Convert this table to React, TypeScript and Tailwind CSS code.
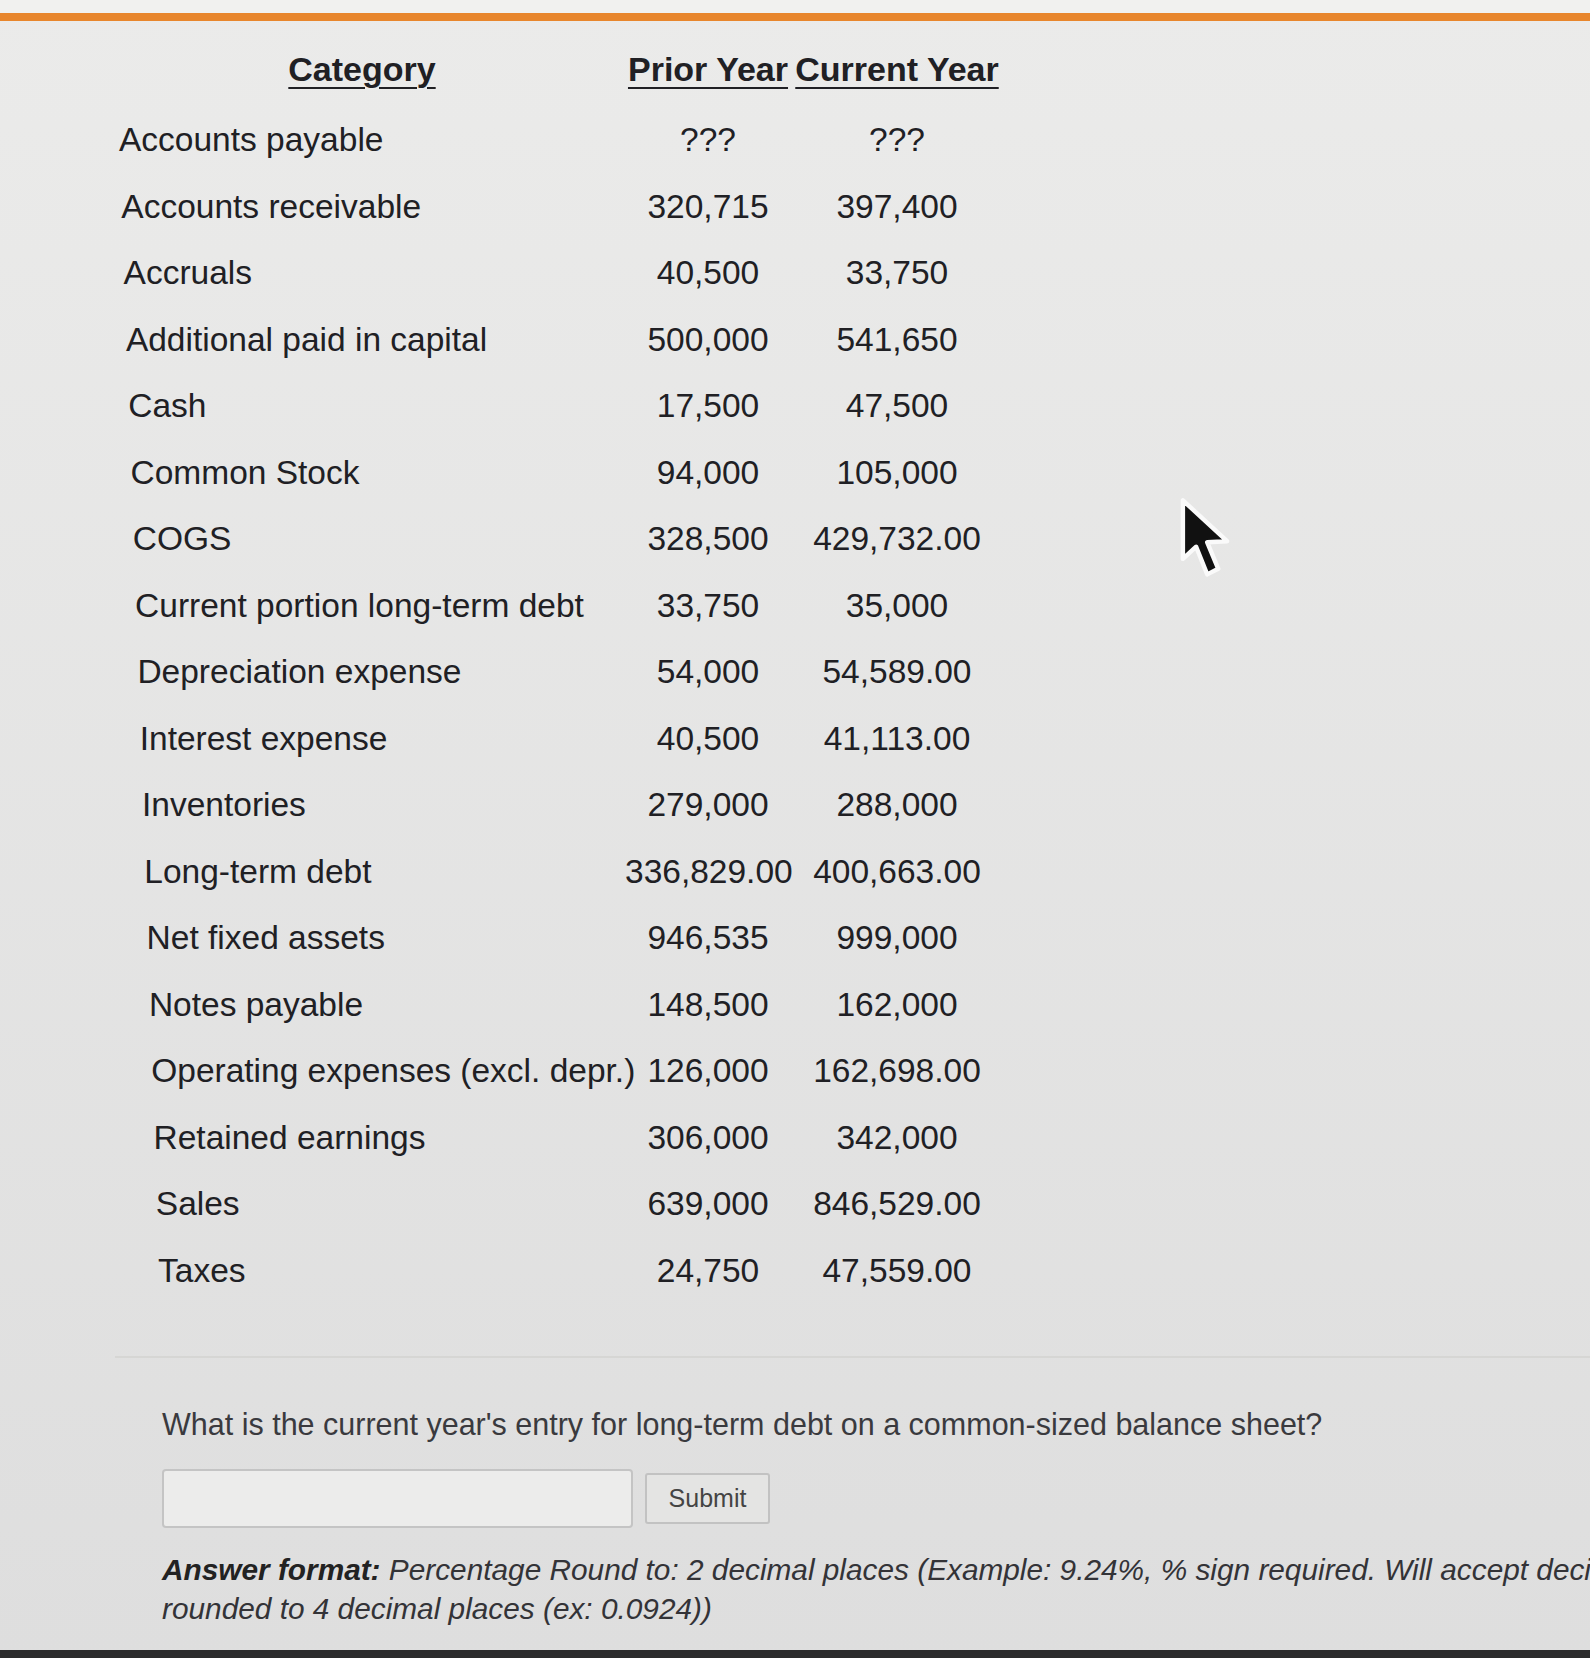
import React from 'react';

type Row = { label: string; prior: string; current: string };

const rows: Row[] = [
  { label: 'Accounts payable', prior: '???', current: '???' },
  { label: 'Accounts receivable', prior: '320,715', current: '397,400' },
  { label: 'Accruals', prior: '40,500', current: '33,750' },
  { label: 'Additional paid in capital', prior: '500,000', current: '541,650' },
  { label: 'Cash', prior: '17,500', current: '47,500' },
  { label: 'Common Stock', prior: '94,000', current: '105,000' },
  { label: 'COGS', prior: '328,500', current: '429,732.00' },
  { label: 'Current portion long-term debt', prior: '33,750', current: '35,000' },
  { label: 'Depreciation expense', prior: '54,000', current: '54,589.00' },
  { label: 'Interest expense', prior: '40,500', current: '41,113.00' },
  { label: 'Inventories', prior: '279,000', current: '288,000' },
  { label: 'Long-term debt', prior: '336,829.00', current: '400,663.00' },
  { label: 'Net fixed assets', prior: '946,535', current: '999,000' },
  { label: 'Notes payable', prior: '148,500', current: '162,000' },
  { label: 'Operating expenses (excl. depr.)', prior: '126,000', current: '162,698.00' },
  { label: 'Retained earnings', prior: '306,000', current: '342,000' },
  { label: 'Sales', prior: '639,000', current: '846,529.00' },
  { label: 'Taxes', prior: '24,750', current: '47,559.00' },
];

// mouse pointer sitting over the page
const Cursor = () => (
  <svg width="54" height="84" viewBox="0 0 48 76" className="absolute left-[1178px] top-[497px]">
    <path
      d="M4 3 L4 56 L16 45 L26 70 L36 65 L26 41 L44 40 Z"
      fill="#111"
      stroke="#fafafa"
      strokeWidth="4"
      strokeLinejoin="round"
    />
  </svg>
);

export default function App() {
  return (
    <div className="relative w-[1590px] h-[1658px] overflow-hidden bg-gradient-to-b from-[#ebebea] to-[#dedede] text-[#202024] font-['Liberation_Sans',Arial,sans-serif]">
      <div className="h-[13px] bg-[#f1f1ef]" />
      <div className="h-[8px] bg-[#e8862c]" />

      <div className="pl-[99px] pt-[10px]">
        <div className="grid grid-cols-[526px_166px_212px] h-[76px] items-center text-[34px] font-bold">
          <div className="text-center underline underline-offset-[6px] decoration-2">Category</div>
          <div className="text-center underline underline-offset-[6px] decoration-2">Prior Year</div>
          <div className="text-center underline underline-offset-[6px] decoration-2">Current Year</div>
        </div>

        {rows.map((r, i) => (
          <div key={r.label} className="grid grid-cols-[526px_166px_212px] h-[66.5px] items-center text-[33.5px]">
            <div className="whitespace-nowrap" style={{ paddingLeft: 20 + i * 2.3 }}>{r.label}</div>
            <div className="text-center">{r.prior}</div>
            <div className="text-center">{r.current}</div>
          </div>
        ))}
      </div>

      <div className="ml-[115px] mt-[52px] border-t-2 border-[#d6d6d4]" />

      <div className="pl-[162px] pt-[47px] text-[#3a3a3e]">
        <p className="text-[30.5px] leading-[38px]">
          What is the current year's entry for long-term debt on a common-sized balance sheet?
        </p>

        <div className="flex items-center gap-[12px] mt-[26px]">
          <div className="w-[471px] h-[59px] rounded-[4px] border-2 border-[#c4c4c4] bg-[#ececeb]" />
          <button className="w-[125px] h-[51px] rounded-[3px] border-2 border-[#c2c2c2] bg-[#e4e4e3] text-[25px] text-[#444]">
            Submit
          </button>
        </div>

        <div className="mt-[22px] text-[29.8px] leading-[39px] italic text-[#333337] whitespace-nowrap">
          <div>
            <span className="font-bold text-[#222]">Answer format:</span> Percentage Round to: 2 decimal places (Example: 9.24%, % sign required. Will accept decimals
          </div>
          <div>rounded to 4 decimal places (ex: 0.0924))</div>
        </div>
      </div>

      <div className="absolute left-0 right-0 bottom-0 h-[8px] bg-[#2b2b2c]" />
      <Cursor />
    </div>
  );
}
